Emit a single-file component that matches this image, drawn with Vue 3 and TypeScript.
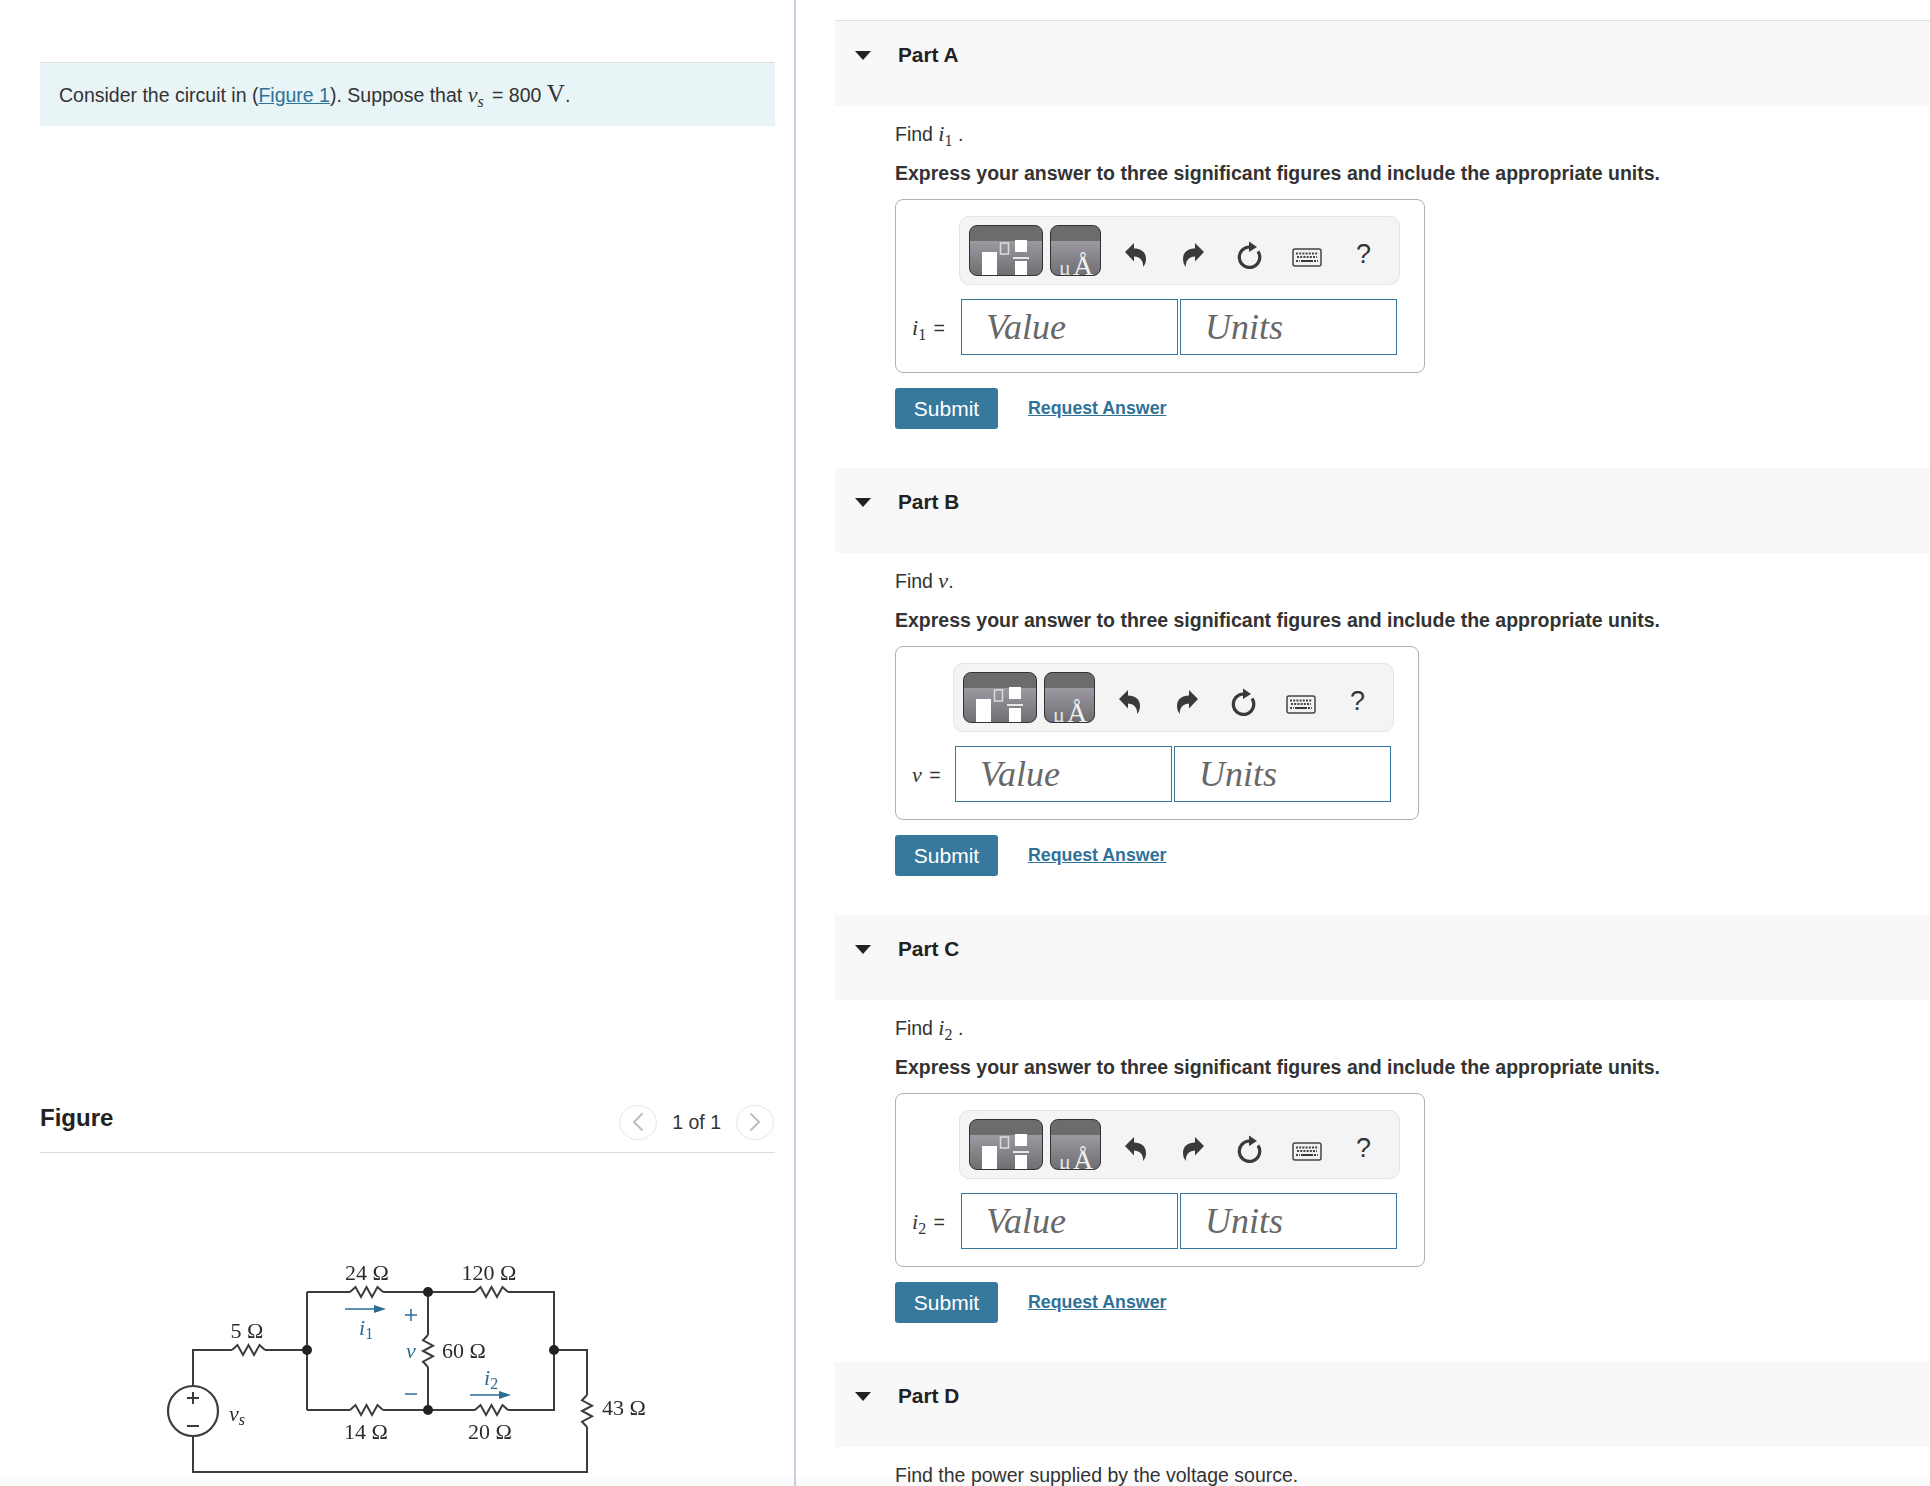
<template>
  <div class="page">
    <!-- left column: problem text and figure -->
    <section class="left-panel">
      <div class="intro">
        Consider the circuit in (<a class="link">Figure 1</a>). Suppose that
        <span class="math"><i>v</i><sub><i>s</i></sub></span> = 800 <span class="unit">V</span>.
      </div>

      <div class="figure-head">
        <h2>Figure</h2>
        <div class="pager">
          <button class="pager-btn">
            <svg width="12" height="20" viewBox="0 0 12 20"><path d="M10.5 1.5 2 10l8.5 8.5" /></svg>
          </button>
          <span>1 of 1</span>
          <button class="pager-btn">
            <svg width="12" height="20" viewBox="0 0 12 20"><path d="M1.5 1.5 10 10l-8.5 8.5" /></svg>
          </button>
        </div>
      </div>

      <svg class="circuit" width="520" height="246" viewBox="0 0 520 246">
        <g class="wires">
          <path d="M43 146V110H82M115 110H157M157 52V170M157 52H200M233 52H325M358 52H404V170H358M325 170H233M200 170H157" />
          <path d="M278 52V95M278 127V170M404 110H437V155M437 187V232H43V196" />
          <path v-for="r in resistors" :key="r" :d="r" />
          <circle cx="43" cy="171" r="25" />
          <path d="M37 158H49M43 152V164M37 186H49" />
        </g>
        <g class="nodes">
          <circle cx="157" cy="110" r="5" />
          <circle cx="278" cy="52" r="5" />
          <circle cx="278" cy="170" r="5" />
          <circle cx="404" cy="110" r="5" />
        </g>
        <g class="labels">
          <text x="217" y="40" text-anchor="middle">24 Ω</text>
          <text x="339" y="40" text-anchor="middle">120 Ω</text>
          <text x="97" y="98" text-anchor="middle">5 Ω</text>
          <text x="292" y="118">60 Ω</text>
          <text x="216" y="199" text-anchor="middle">14 Ω</text>
          <text x="340" y="199" text-anchor="middle">20 Ω</text>
          <text x="452" y="175">43 Ω</text>
          <text x="79" y="181" class="it">v<tspan dy="4" font-size="16">s</tspan></text>
        </g>
        <g class="blue">
          <path class="blue-line" d="M195 69H228M320 155H353" />
          <path d="M236 69l-12-4v8zM361 155l-12-4v8z" />
          <path class="blue-line" d="M255 75H267M261 69V81M255 154H267" />
          <text x="209" y="95" class="it">i<tspan dy="4" font-size="16" font-style="normal">1</tspan></text>
          <text x="334" y="145" class="it">i<tspan dy="4" font-size="16" font-style="normal">2</tspan></text>
          <text x="256" y="118" class="it">v</text>
        </g>
      </svg>
    </section>

    <!-- right column: the parts -->
    <section class="right-panel">
      <div v-for="part in parts" :key="part.name" class="part" :class="{ first: part.name === 'Part A' }">
        <header class="part-head">
          <span class="caret" />
          <h3>{{ part.name }}</h3>
        </header>
        <div class="part-body">
          <p class="find">
            Find <span class="math"><i>{{ part.symbol }}</i><sub v-if="part.sub">{{ part.sub }}</sub></span><template v-if="part.sub">&nbsp;</template>.
          </p>
          <p class="hint">Express your answer to three significant figures and include the appropriate units.</p>

          <div class="answer-box" :class="{ narrow: !part.sub }">
            <div class="toolbar">
              <button class="tool-btn wide">
                <svg width="72" height="35" viewBox="0 0 72 35">
                  <rect x="12" y="12" width="15" height="23" fill="#fff" />
                  <rect x="30.5" y="3" width="8" height="11" fill="none" stroke="#dcdcdc" stroke-width="1.5" />
                  <rect x="45" width="12" height="12" fill="#fff" />
                  <rect x="43" y="17" width="16" height="2" fill="#e8e8e8" />
                  <rect x="45" y="21" width="12" height="14" fill="#fff" />
                </svg>
              </button>
              <button class="tool-btn narrow-btn">
                <svg width="49" height="35" viewBox="0 0 49 35">
                  <text x="8" y="35" class="mu">μ</text>
                  <text x="22" y="35" class="angstrom">Å</text>
                </svg>
              </button>
              <span class="tool-icon first-icon">
                <svg width="22" height="24" viewBox="0 0 22 24"><path :d="arrowPath" /></svg>
              </span>
              <span class="tool-icon">
                <svg width="22" height="24" viewBox="0 0 22 24"><path :d="arrowPath" transform="matrix(-1 0 0 1 22 0)" /></svg>
              </span>
              <span class="tool-icon">
                <svg width="26" height="30" viewBox="0 0 26 30">
                  <path class="reset-ring" d="M13 7A10.2 10.2 0 1 0 21 11.5" />
                  <path d="M12 1.5l8 5.5-8 5z" />
                </svg>
              </span>
              <span class="tool-icon keyboard">
                <svg width="30" height="19" viewBox="0 0 30 19">
                  <rect x="1" y="1" width="28" height="17" rx="2" fill="#f2f2f2" stroke="#444" stroke-width="1.5" />
                  <path class="keys" d="M4 5.5H26M5 9H25" />
                  <path class="keys" d="M4 13H8M22 13H26" />
                  <path d="M9 12h12v2H9z" />
                </svg>
              </span>
              <span class="tool-icon help">?</span>
            </div>
            <div class="answer-label">
              <span class="math"><i>{{ part.symbol }}</i><sub v-if="part.sub">{{ part.sub }}</sub></span> =
            </div>
            <div class="answer-inputs">
              <input class="field" placeholder="Value" />
              <input class="field" placeholder="Units" />
            </div>
          </div>

          <div class="actions">
            <button class="submit">Submit</button>
            <a class="request">Request Answer</a>
          </div>
        </div>
      </div>

      <div class="part">
        <header class="part-head">
          <span class="caret" />
          <h3>Part D</h3>
        </header>
        <div class="part-body">
          <p class="find">Find the power supplied by the voltage source.</p>
        </div>
      </div>
    </section>
  </div>
</template>

<script setup lang="ts">
interface Part {
  name: string
  symbol: string
  sub: string
}

const parts: Part[] = [
  { name: 'Part A', symbol: 'i', sub: '1' },
  { name: 'Part B', symbol: 'v', sub: '' },
  { name: 'Part C', symbol: 'i', sub: '2' },
]

const arrowPath = 'M0 9 9 0v5.5c7 0 12 3.5 12 10.5 0 3-1 6-3 8 .5-4-1-10-9-10.5v5z'

// resistor zigzag, horizontal or vertical
function zigzag(x: number, y: number, len: number, vertical = false): string {
  const step = len / 6
  const pts: string[] = []
  for (let k = 0; k <= 6; k++) {
    const along = k * step
    const off = k === 0 || k === 6 ? 0 : k % 2 ? -5 : 5
    pts.push(vertical ? `${x + off} ${y + along}` : `${x + along} ${y + off}`)
  }
  return 'M' + pts.join('L')
}

const resistors = [
  zigzag(200, 52, 33),
  zigzag(325, 52, 33),
  zigzag(82, 110, 33),
  zigzag(200, 170, 33),
  zigzag(325, 170, 33),
  zigzag(278, 95, 32, true),
  zigzag(437, 155, 32, true),
]
</script>

<style>
html,
body {
  margin: 0;
  background: #fff;
  overflow: hidden;
}
</style>

<style scoped>
.page {
  position: relative;
  display: flex;
  width: 1930px;
  height: 1486px;
  overflow: hidden;
  font-family: "Liberation Sans", Arial, sans-serif;
  font-size: 19.5px;
  color: #333;
}

/* faint shade along the bottom edge of the window */
.page::after {
  content: "";
  position: absolute;
  left: 0;
  right: 0;
  bottom: 0;
  height: 14px;
  background: linear-gradient(transparent, rgba(0, 0, 0, 0.025));
  pointer-events: none;
}

.left-panel {
  width: 796px;
  flex-shrink: 0;
  box-sizing: border-box;
  padding: 62px 19px 0 40px;
  border-right: 2px solid #c5d2e2;
}

.intro {
  box-sizing: border-box;
  height: 64px;
  padding-left: 19px;
  line-height: 62px;
  background: #e9f4f7;
  border-top: 1px solid #dcdfe2;
}

.intro .math {
  margin-right: 3px;
}

.link {
  color: #2f7299;
  text-decoration: underline;
}

.math {
  font-family: "Liberation Serif", "DejaVu Serif", serif;
  font-size: 22px;
}

.math sub {
  font-size: 16px;
  line-height: 0;
}

.unit {
  font-family: "Liberation Serif", serif;
  font-size: 25px;
}

.figure-head {
  display: flex;
  justify-content: space-between;
  align-items: center;
  box-sizing: border-box;
  height: 57px;
  margin-top: 970px;
  padding-right: 1px;
  border-bottom: 1px solid #d9dce0;
}

.figure-head h2 {
  margin: 0 0 12px;
  font-size: 24px;
  color: #222;
}

.pager {
  display: flex;
  align-items: center;
  gap: 15px;
  margin-bottom: 4px;
}

.pager-btn {
  display: flex;
  align-items: center;
  justify-content: center;
  width: 38px;
  height: 35px;
  padding: 0;
  background: #fff;
  border: 1px solid #e8e8e8;
  border-radius: 50%;
}

.pager-btn path {
  fill: none;
  stroke: #bdbdbd;
  stroke-width: 2;
}

.circuit {
  display: block;
  margin: 87px 0 0 110px;
  filter: blur(0.45px);
}

.wires path,
.wires circle {
  fill: none;
  stroke: #3c3c3c;
  stroke-width: 2;
}

.wires circle {
  stroke-width: 2.2;
}

.nodes circle {
  fill: #222;
}

.labels text {
  font-family: "Liberation Serif", serif;
  font-size: 22px;
  fill: #2c2c2c;
}

.blue {
  fill: #2c6d96;
}

.blue-line {
  fill: none;
  stroke: #2c6d96;
  stroke-width: 1.5;
}

.blue text {
  font-family: "Liberation Serif", serif;
  font-size: 22px;
}

.it {
  font-style: italic;
}

.right-panel {
  flex: 1;
  min-width: 0;
  padding: 20px 0 0 39px;
}

.part-head {
  display: flex;
  gap: 27px;
  box-sizing: border-box;
  height: 85px;
  padding: 20px 0 0 20px;
  background: #f8f8f8;
}

.part.first .part-head {
  height: 86px;
  border-top: 1px solid #dcdfe2;
}

.part-head h3 {
  margin: 0;
  font-size: 20.8px;
  line-height: 28px;
  color: #222;
}

.caret {
  width: 0;
  height: 0;
  margin-top: 10px;
  border-left: 8px solid transparent;
  border-right: 8px solid transparent;
  border-top: 9px solid #222;
}

.part-body {
  padding: 14px 0 39px 60px;
}

.part-body p {
  margin: 0;
  line-height: 28px;
}

.part-body .hint {
  margin-top: 11px;
  font-weight: 700;
}

.answer-box {
  display: grid;
  grid-template-columns: 47px 441px;
  grid-template-rows: 69px 56px;
  align-content: start;
  align-items: center;
  row-gap: 14px;
  box-sizing: border-box;
  width: 530px;
  height: 174px;
  margin-top: 12px;
  padding: 16px 0 0 16px;
  background: #fff;
  border: 1px solid #b0b0b0;
  border-radius: 8px;
}

.answer-box.narrow {
  grid-template-columns: 41px 441px;
  width: 524px;
}

.toolbar {
  grid-column: 2;
  display: flex;
  align-items: center;
  box-sizing: border-box;
  height: 69px;
  padding: 0 0 0 9px;
  background: #f4f4f4;
  border: 1px solid #e4e4e4;
  border-radius: 10px;
}

.tool-btn {
  display: flex;
  align-items: flex-end;
  flex-shrink: 0;
  box-sizing: border-box;
  height: 51px;
  padding: 0;
  overflow: hidden;
  background: linear-gradient(#6c6c6c 0 15px, #9c9aa1 15px, #6f6e72 100%);
  border: 1px solid #333;
  border-radius: 8px;
}

.tool-btn.wide {
  width: 74px;
}

.tool-btn.narrow-btn {
  width: 51px;
  margin-left: 7px;
}

.mu {
  font-family: "Liberation Serif", serif;
  font-size: 22px;
  fill: #e4e4e4;
}

.angstrom {
  font-family: "Liberation Serif", serif;
  font-size: 28px;
  fill: #f2f2f2;
}

.tool-icon {
  display: flex;
  align-items: center;
  justify-content: center;
  width: 57px;
  padding-top: 8px;
}

.first-icon {
  margin-left: 6px;
}

.tool-icon.keyboard {
  padding-top: 14px;
}

.tool-icon path {
  fill: #3a3a3a;
}

.tool-icon .reset-ring {
  fill: none;
  stroke: #3a3a3a;
  stroke-width: 3.2;
}

.tool-icon .keys {
  fill: none;
  stroke: #444;
  stroke-width: 2.2;
  stroke-dasharray: 2 1.2;
}

.help {
  font-size: 27px;
  color: #333;
}

.answer-label {
  font-size: 19.5px;
  padding-top: 1px;
}

.answer-label .math {
  margin-right: 2px;
}

.answer-inputs {
  display: flex;
  gap: 2px;
  padding-left: 2px;
}

.field {
  box-sizing: border-box;
  width: 217px;
  height: 56px;
  padding: 0 0 0 24px;
  border: 1px solid #37779b;
  border-radius: 0;
  outline: none;
  font-family: "Liberation Serif", serif;
  font-style: italic;
  font-size: 36px;
}

.field::placeholder {
  color: #686868;
  opacity: 1;
}

.actions {
  display: flex;
  align-items: center;
  gap: 30px;
  margin-top: 15px;
}

.submit {
  width: 103px;
  height: 41px;
  padding: 0;
  background: #37799c;
  border: none;
  border-radius: 3px;
  font-family: inherit;
  font-size: 21px;
  color: #fff;
}

.request {
  font-size: 17.75px;
  font-weight: 700;
  color: #2f7299;
  text-decoration: underline;
}
</style>
